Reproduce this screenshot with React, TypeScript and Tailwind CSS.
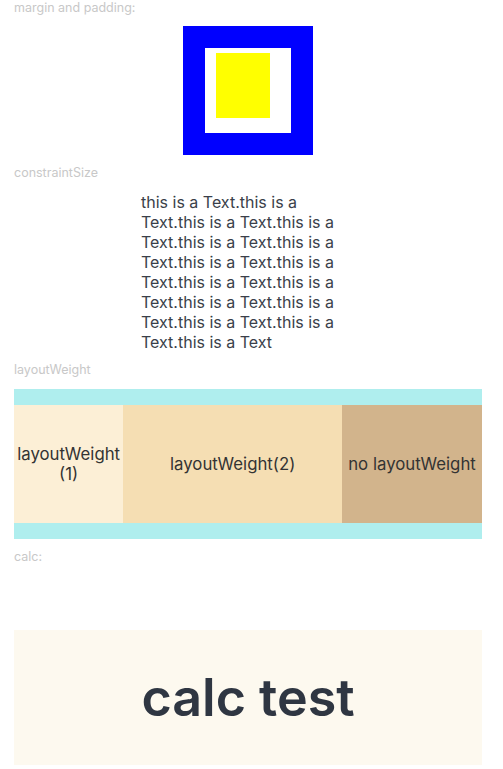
import React from "react";

const font = { fontFamily: 'Inter, "Noto Sans", sans-serif' };

function Label({ children, className = "" }: { children: React.ReactNode; className?: string }) {
  return (
    <div className={"text-[12.5px] leading-[16px] text-[#c8c8c8] " + className}>{children}</div>
  );
}

const lines = [
  "this is a Text.this is a",
  "Text.this is a Text.this is a",
  "Text.this is a Text.this is a",
  "Text.this is a Text.this is a",
  "Text.this is a Text.this is a",
  "Text.this is a Text.this is a",
  "Text.this is a Text.this is a",
  "Text.this is a Text",
];

export default function App() {
  return (
    <div className="w-[503px] bg-white" style={font}>
      <div className="ml-[14px] w-[468px] flex flex-col">
        <Label>margin and padding:</Label>
        <div className="mt-[10px] flex justify-center">
          <div className="w-[130px] h-[129px] bg-[#0000ff] p-[22px]">
            <div className="w-full h-full bg-white pl-[11px] pt-[5px]">
              <div className="w-[54px] h-[65px] bg-[#ffff00]" />
            </div>
          </div>
        </div>
        <Label className="mt-[10px]">constraintSize</Label>
        <div className="mt-[11px] flex justify-center">
          <div className="w-[214px] text-[16px] leading-[20px] text-[#3a3f4a]">
            {lines.map((l, i) => (
              <div key={i} className="whitespace-nowrap">{l}</div>
            ))}
          </div>
        </div>
        <Label className="mt-[10px]">layoutWeight</Label>
        <div className="mt-[11px] bg-[#afeeee] py-[16px]">
          <div className="flex h-[118px] text-[16.8px] leading-[20px] text-[#333333]">
            <div className="flex-1 bg-[#fcefd6] flex items-center justify-center text-center">
              layoutWeight
              <br />
              (1)
            </div>
            <div className="flex-[2] bg-[#f5deb3] flex items-center justify-center text-center">
              layoutWeight(2)
            </div>
            <div className="w-[140px] bg-[#d2b48c] flex items-center justify-center text-center whitespace-nowrap">
              no layoutWeight
            </div>
          </div>
        </div>
        <Label className="mt-[10px]">calc:</Label>
        <div className="mt-[65px] h-[135px] bg-[#fdf9ef] flex items-center justify-center">
          <span className="text-[52px] font-semibold text-[#2f3642] leading-none">calc test</span>
        </div>
      </div>
    </div>
  );
}
